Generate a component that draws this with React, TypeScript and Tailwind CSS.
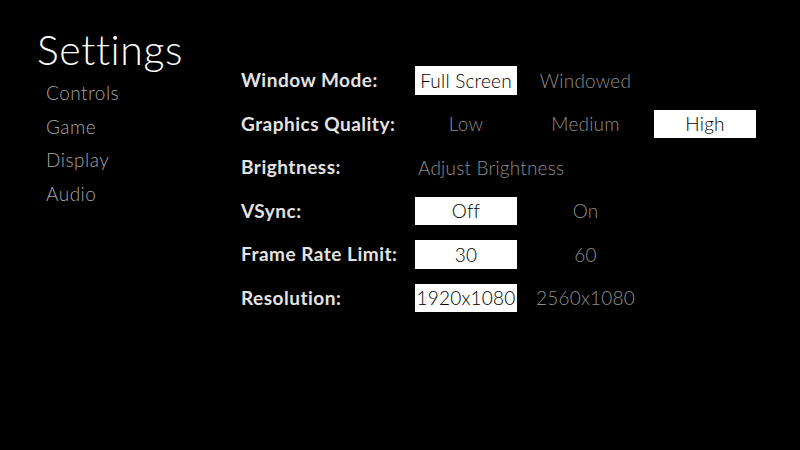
const rows: { label: string; options: string[]; selected: number; wide?: boolean }[] = [
  { label: 'Window Mode:', options: ['Full Screen', 'Windowed'], selected: 0 },
  { label: 'Graphics Quality:', options: ['Low', 'Medium', 'High'], selected: 2 },
  { label: 'Brightness:', options: ['Adjust Brightness'], selected: -1, wide: true },
  { label: 'VSync:', options: ['Off', 'On'], selected: 0 },
  { label: 'Frame Rate Limit:', options: ['30', '60'], selected: 0 },
  { label: 'Resolution:', options: ['1920x1080', '2560x1080'], selected: 0 },
];

const menu = ['Controls', 'Game', 'Display', 'Audio'];

export default function App() {
  return (
    <div
      className="w-[800px] h-[450px] bg-black flex overflow-hidden"
      style={{ fontFamily: 'Lato, "Open Sans", sans-serif' }}
    >
      {/* Sidebar */}
      <div className="w-[241px] pl-[37px] pt-[26px]">
        <h1 className="text-white text-[41px] leading-[48px] font-light tracking-[0.6px]">Settings</h1>
        <div className="flex flex-col pl-[9px] mt-[2px]">
          {menu.map(item => (
            <div key={item} className="text-[#a6a6a6] text-[19px] leading-[33.5px] font-light tracking-[0.5px]">
              {item}
            </div>
          ))}
        </div>
      </div>

      {/* Options */}
      <div className="flex flex-col gap-[15.1px] pt-[66px]">
        {rows.map(row => (
          <div key={row.label} className="flex items-center h-[28.5px]">
            <div className="w-[174px] text-[#e3e3e3] text-[19px] font-bold tracking-[0.5px]">{row.label}</div>
            <div className="flex gap-[17.5px]">
              {row.options.map((opt, i) => (
                <div
                  key={opt}
                  className={
                    (row.wide ? 'w-[160px] justify-start pl-[3px]' : 'w-[102px] justify-center') +
                    ' h-[28.5px] flex items-center pt-[1px] text-[19px] font-light tracking-[0.2px] ' +
                    (i === row.selected ? 'bg-white text-black' : 'text-[#8e8e8e]')
                  }
                >
                  {opt}
                </div>
              ))}
            </div>
          </div>
        ))}
      </div>
    </div>
  );
}
